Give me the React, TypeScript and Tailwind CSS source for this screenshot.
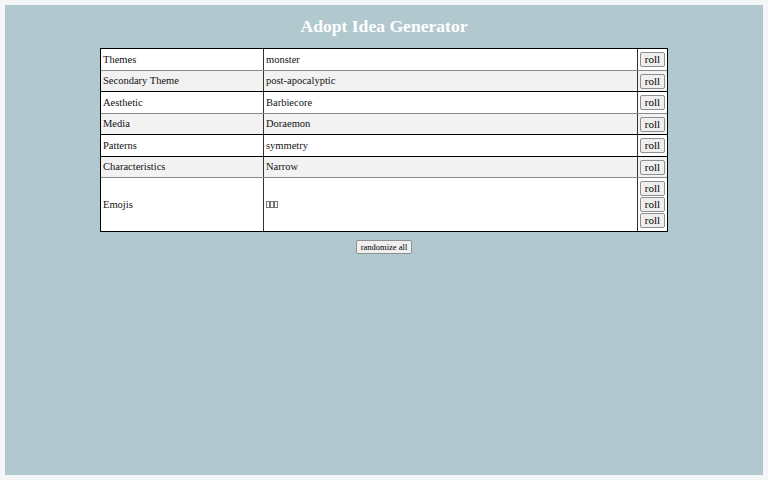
import React from "react";

const rows: { label: string; value: string; h: string; bg: string; bt: string }[] = [
  { label: "Themes", value: "monster", h: "h-[21px]", bg: "bg-white", bt: "" },
  { label: "Secondary Theme", value: "post-apocalyptic", h: "h-[21px]", bg: "bg-[#f2f2f2]", bt: "border-t border-t-[#8a8a8a]" },
  { label: "Aesthetic", value: "Barbiecore", h: "h-[22px]", bg: "bg-white", bt: "border-t border-t-black" },
  { label: "Media", value: "Doraemon", h: "h-[21px]", bg: "bg-[#f2f2f2]", bt: "border-t border-t-[#8a8a8a]" },
  { label: "Patterns", value: "symmetry", h: "h-[22px]", bg: "bg-white", bt: "border-t border-t-black" },
  { label: "Characteristics", value: "Narrow", h: "h-[21px]", bg: "bg-[#f2f2f2]", bt: "border-t border-t-black" },
];

function Roll() {
  return (
    <button className="h-[15px] w-[25px] rounded-[2px] border border-[#8f8f8f] bg-[#efefef] text-[11px] leading-none text-black [font-family:'Liberation_Serif',serif]">
      roll
    </button>
  );
}

function Tofu() {
  return <span className="inline-block h-[7px] w-[4px] border border-[#777]" />;
}

export default function App() {
  return (
    <div className="min-h-screen bg-[#f4f5f7] p-[5px] [font-family:'Liberation_Serif',serif]">
      <div className="flex h-[470px] w-[758px] flex-col items-center bg-[#b0c8ce]">
        <h1 className="mt-[9px] h-[34px] text-[17.6px] font-bold leading-[24px] text-white [font-family:'Liberation_Serif',serif]">
          Adopt Idea Generator
        </h1>
        <div className="w-[568px] border border-black bg-white text-[10.5px] text-[#111] [font-family:'Liberation_Serif',serif]">
          {rows.map((r) => (
            <div key={r.label} className={`flex ${r.h} ${r.bg} ${r.bt}`}>
              <div className="flex w-[163px] items-center border-r border-[#333] pl-[2px]">{r.label}</div>
              <div className="flex w-[374px] items-center border-r border-[#333] pl-[2px]">{r.value}</div>
              <div className="flex flex-1 items-center justify-center">
                <Roll />
              </div>
            </div>
          ))}
          <div className="flex h-[54px] border-t border-t-[#8a8a8a] bg-white">
            <div className="flex w-[163px] items-center border-r border-[#333] pl-[2px]">Emojis</div>
            <div className="flex w-[374px] items-center border-r border-[#333] pl-[2px]">
              <Tofu />
              <Tofu />
              <Tofu />
            </div>
            <div className="flex flex-1 flex-col items-center justify-center gap-[1px]">
              <Roll />
              <Roll />
              <Roll />
            </div>
          </div>
        </div>
        <button className="mt-[8px] h-[14px] rounded-[2px] border border-[#8f8f8f] bg-[#efefef] px-[4px] text-[8.5px] leading-none text-black [font-family:'Liberation_Serif',serif]">
          randomize all
        </button>
      </div>
    </div>
  );
}
